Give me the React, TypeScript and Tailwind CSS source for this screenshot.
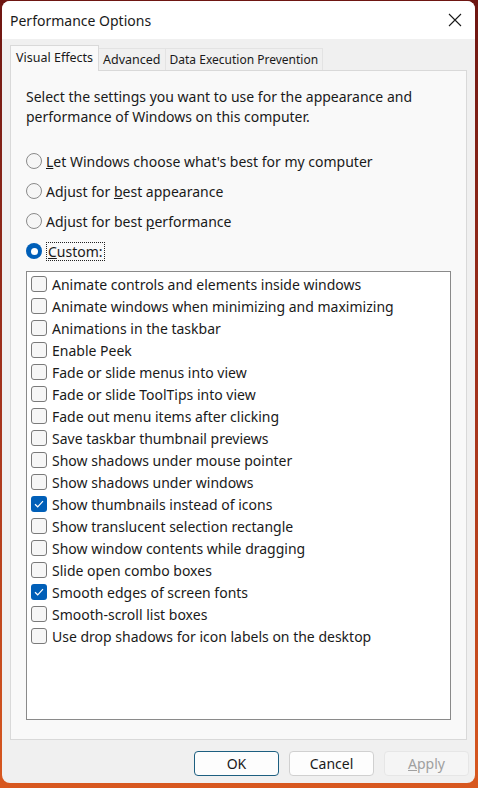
import React from "react";

const items: { label: string; checked: boolean }[] = [
  { label: "Animate controls and elements inside windows", checked: false },
  { label: "Animate windows when minimizing and maximizing", checked: false },
  { label: "Animations in the taskbar", checked: false },
  { label: "Enable Peek", checked: false },
  { label: "Fade or slide menus into view", checked: false },
  { label: "Fade or slide ToolTips into view", checked: false },
  { label: "Fade out menu items after clicking", checked: false },
  { label: "Save taskbar thumbnail previews", checked: false },
  { label: "Show shadows under mouse pointer", checked: false },
  { label: "Show shadows under windows", checked: false },
  { label: "Show thumbnails instead of icons", checked: true },
  { label: "Show translucent selection rectangle", checked: false },
  { label: "Show window contents while dragging", checked: false },
  { label: "Slide open combo boxes", checked: false },
  { label: "Smooth edges of screen fonts", checked: true },
  { label: "Smooth-scroll list boxes", checked: false },
  { label: "Use drop shadows for icon labels on the desktop", checked: false },
];

function Radio({ selected }: { selected?: boolean }) {
  if (selected) {
    return (
      <span className="flex h-[16px] w-[16px] shrink-0 items-center justify-center rounded-full bg-[#005fb8]">
        <span className="h-[7px] w-[7px] rounded-full bg-white" />
      </span>
    );
  }
  return <span className="h-[16px] w-[16px] shrink-0 rounded-full border border-[#8a8a8a] bg-[#f6f6f6]" />;
}

function Check({ checked }: { checked: boolean }) {
  if (checked) {
    return (
      <span className="flex h-[16px] w-[16px] shrink-0 items-center justify-center rounded-[3px] bg-[#005fb8]">
        <svg width="10" height="8" viewBox="0 0 10 8">
          <path d="M1 4.2 L3.7 6.8 L9 1.2" fill="none" stroke="white" strokeWidth="1.2" />
        </svg>
      </span>
    );
  }
  return <span className="h-[16px] w-[16px] shrink-0 rounded-[3px] border border-[#7a7a7a] bg-[#f6f6f6]" />;
}

export default function App() {
  return (
    <div
      className="h-[788px] w-[478px] bg-gradient-to-b from-[#6e1612] via-[#a3321c] to-[#d8581f] pb-[5px] pl-[2px] pr-[3px] pt-[1px]"
      style={{ fontFamily: '"Noto Sans", "Open Sans", sans-serif' }}
    >
      <div className="flex h-full flex-col overflow-hidden rounded-[8px] bg-[#f0f0f0] text-[14px] text-[#1a1a1a]">
        {/* Title bar */}
        <div className="flex h-[38px] shrink-0 items-center justify-between bg-white pl-[8px] pr-[13px]">
          <span className="text-[14px] text-[#1a1a1a]">Performance Options</span>
          <svg width="14" height="14" viewBox="0 0 14 14">
            <path d="M1 1 L13 13 M13 1 L1 13" stroke="#1a1a1a" strokeWidth="1.1" fill="none" />
          </svg>
        </div>

        {/* Tabs */}
        <div className="flex shrink-0 items-end px-[8px] pt-[6px]">
          <div className="relative z-10 -mb-px flex h-[26px] items-start border border-b-0 border-[#d9d9d9] bg-[#f9f9f9] px-[5px] pt-[3px] text-[12.5px]">
            Visual Effects
          </div>
          <div className="flex h-[22px] items-start border border-l-0 border-b-0 border-[#e3e3e3] bg-[#f0f0f0] px-[4px] pt-[2px] text-[12.5px]">
            Advanced
          </div>
          <div className="flex h-[22px] items-start border border-l-0 border-b-0 border-[#e3e3e3] bg-[#f0f0f0] px-[4px] pt-[2px] text-[12px]">
            Data Execution Prevention
          </div>
        </div>

        {/* Panel */}
        <div className="mx-[8px] flex h-[670px] shrink-0 flex-col border border-[#d9d9d9] bg-[#f9f9f9] px-[15px] pb-[19px] pt-[16px]">
          <p className="leading-[20px]">
            Select the settings you want to use for the appearance and
            <br />
            performance of Windows on this computer.
          </p>

          <div className="mt-[19px] flex flex-col">
            <div className="flex h-[30px] items-center gap-[4px]">
              <Radio />
              <span>
                <span className="underline">L</span>et Windows choose what's best for my computer
              </span>
            </div>
            <div className="flex h-[30px] items-center gap-[4px]">
              <Radio />
              <span>
                Adjust for <span className="underline">b</span>est appearance
              </span>
            </div>
            <div className="flex h-[30px] items-center gap-[4px]">
              <Radio />
              <span>
                Adjust for best <span className="underline">p</span>erformance
              </span>
            </div>
            <div className="flex h-[30px] items-center gap-[4px]">
              <Radio selected />
              <span className="border border-dotted border-[#222] px-px leading-[17px]">
                <span className="underline">C</span>ustom:
              </span>
            </div>
          </div>

          <div className="mt-[5px] flex-1 border border-[#8a8a8a] bg-white pt-px">
            {items.map((it) => (
              <div key={it.label} className="flex h-[22px] items-center gap-[5px] pl-[4px]">
                <Check checked={it.checked} />
                <span>{it.label}</span>
              </div>
            ))}
          </div>
        </div>

        {/* Footer */}
        <div className="flex flex-1 items-start justify-end gap-[10px] pr-[6px] pt-[11px]">
          <button className="h-[25px] w-[85px] rounded-[4px] border border-[#1d5f80] bg-[#fdfdfd] text-[14px] text-[#1a1a1a]">
            OK
          </button>
          <button className="h-[25px] w-[85px] rounded-[4px] border border-[#d0d0d0] bg-[#fdfdfd] text-[14px] text-[#1a1a1a]">
            Cancel
          </button>
          <button className="h-[25px] w-[85px] rounded-[4px] border border-[#e6e6e6] bg-[#f5f5f5] text-[14px] text-[#a0a0a0]">
            <span className="underline">A</span>pply
          </button>
        </div>
      </div>
    </div>
  );
}
